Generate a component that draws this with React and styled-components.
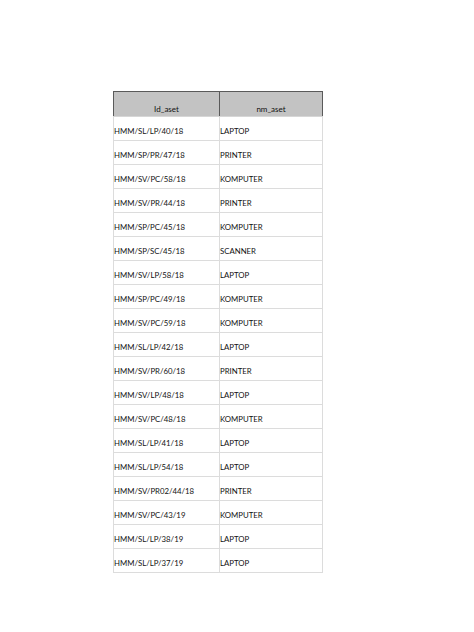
import React from "react";
import styled, { createGlobalStyle } from "styled-components";

const Global = createGlobalStyle`
  html, body {
    margin: 0;
    padding: 0;
    background: #ffffff;
  }
`;

const Page = styled.div`
  width: 474px;
  height: 632px;
  background: #ffffff;
  padding: 91px 0 0 113px;
  box-sizing: border-box;
  font-family: Lato, "Open Sans", "Liberation Sans", sans-serif;
  color: #111;
`;

const Table = styled.table`
  border-collapse: collapse;
  table-layout: fixed;
  width: 207px;
`;

const Row = styled.tr`
  height: ${(p) => (p.head ? 25 : 24)}px;
`;

const TH = styled.th`
  width: ${(p) => p.w}px;
  background: #c3c3c3;
  border: 1px solid #5a5a5a;
  border-bottom: 1px solid #d6d6d6;
  font-weight: 400;
  font-size: 8px;
  line-height: 10px;
  text-align: center;
  vertical-align: bottom;
  padding: 0 0 2px;
`;

const TD = styled.td`
  border: 1px solid #dcdcdc;
  font-size: 7.8px;
  line-height: 10px;
  text-align: left;
  vertical-align: bottom;
  padding: 0 0 4px 0;
  white-space: nowrap;
`;

const rows = [
  ["HMM/SL/LP/40/18", "LAPTOP"],
  ["HMM/SP/PR/47/18", "PRINTER"],
  ["HMM/SV/PC/58/18", "KOMPUTER"],
  ["HMM/SV/PR/44/18", "PRINTER"],
  ["HMM/SP/PC/45/18", "KOMPUTER"],
  ["HMM/SP/SC/45/18", "SCANNER"],
  ["HMM/SV/LP/58/18", "LAPTOP"],
  ["HMM/SP/PC/49/18", "KOMPUTER"],
  ["HMM/SV/PC/59/18", "KOMPUTER"],
  ["HMM/SL/LP/42/18", "LAPTOP"],
  ["HMM/SV/PR/60/18", "PRINTER"],
  ["HMM/SV/LP/48/18", "LAPTOP"],
  ["HMM/SV/PC/48/18", "KOMPUTER"],
  ["HMM/SL/LP/41/18", "LAPTOP"],
  ["HMM/SL/LP/54/18", "LAPTOP"],
  ["HMM/SV/PR02/44/18", "PRINTER"],
  ["HMM/SV/PC/43/19", "KOMPUTER"],
  ["HMM/SL/LP/38/19", "LAPTOP"],
  ["HMM/SL/LP/37/19", "LAPTOP"],
];

export default function App() {
  return (
    <>
      <Global />
      <Page>
        <Table>
          <thead>
            <Row head>
              <TH w={105}>Id_aset</TH>
              <TH w={102}>nm_aset</TH>
            </Row>
          </thead>
          <tbody>
            {rows.map((r, i) => (
              <Row key={i}>
                <TD>{r[0]}</TD>
                <TD>{r[1]}</TD>
              </Row>
            ))}
          </tbody>
        </Table>
      </Page>
    </>
  );
}
